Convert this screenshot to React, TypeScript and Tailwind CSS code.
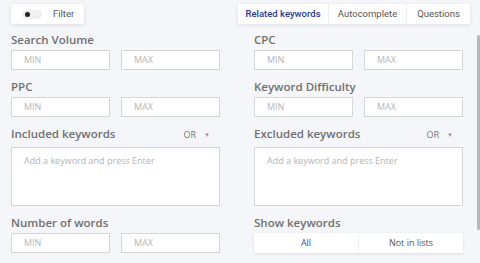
import React from 'react';

const label = "text-[11.5px] font-semibold text-[#707070] leading-none";
const input =
  "h-[20px] w-[99px] border border-[#d6d6d6] bg-white px-3 text-[9px] text-[#b5b5b5] flex items-center";

function MinMax() {
  return (
    <div className="flex justify-between">
      <div className={input}>MIN</div>
      <div className={input}>MAX</div>
    </div>
  );
}

function Field({ title }: { title: string }) {
  return (
    <div className="flex flex-col">
      <div className={`${label} h-[16px]`}>{title}</div>
      <MinMax />
    </div>
  );
}

function Tags({ title }: { title: string }) {
  return (
    <div className="flex flex-col">
      <div className="flex justify-between items-start h-[19px] pr-[10px]">
        <span className={label}>{title}</span>
        <span className="text-[9px] text-[#777] flex items-center gap-[8px] leading-none pt-[2px]">
          OR <span className="text-[6px] text-[#999]">▼</span>
        </span>
      </div>
      <div className="h-[59px] border border-[#d6d6d6] bg-white px-3 pt-[8px] text-[9px] text-[#b5b5b5] leading-none">
        Add a keyword and press Enter
      </div>
    </div>
  );
}

export default function App() {
  return (
    <div
      className="relative w-[480px] h-[263px] overflow-hidden bg-[#f5f6fa]"
      style={{ fontFamily: '"Open Sans", Roboto, sans-serif' }}
    >
      {/* top bar */}
      <div className="flex justify-between items-start pt-[4px] pl-[11px] pr-[10px]">
        <div className="flex items-center h-[20px] w-[73px] bg-white rounded-[3px] shadow-[0_1px_4px_rgba(0,0,0,0.12)] pl-[11px]">
          <div className="relative w-[20px] h-[9px] rounded-full bg-[#f0f0f2]">
            <div className="absolute left-[3px] top-[2px] w-[5px] h-[5px] rounded-full bg-[#222]" />
          </div>
          <span className="ml-[11px] text-[9.5px] text-[#555]" style={{ fontFamily: 'Roboto, sans-serif' }}>
            Filter
          </span>
        </div>
        <div
          className="flex h-[20px] bg-white shadow-[0_1px_4px_rgba(0,0,0,0.1)] text-[9.5px] text-[#555]"
          style={{ fontFamily: 'Roboto, sans-serif' }}
        >
          <div className="w-[91px] flex items-center justify-center font-medium text-[#2b3a8c] border-r border-[#eceef3]">
            Related keywords
          </div>
          <div className="w-[78px] flex items-center justify-center border-r border-[#eceef3]">
            Autocomplete
          </div>
          <div className="w-[63px] flex items-center justify-center">Questions</div>
        </div>
      </div>

      {/* filters grid */}
      <div className="grid grid-cols-[209px_209px] gap-x-[34px] px-[11px] pt-[10px]">
        <div className="flex flex-col gap-[11px]">
          <Field title="Search Volume" />
          <Field title="PPC" />
          <Tags title="Included keywords" />
          <Field title="Number of words" />
        </div>
        <div className="flex flex-col gap-[11px]">
          <Field title="CPC" />
          <Field title="Keyword Difficulty" />
          <Tags title="Excluded keywords" />
          <div className="flex flex-col">
            <div className={`${label} h-[16px]`}>Show keywords</div>
            <div className="flex h-[20px] bg-white shadow-[0_1px_3px_rgba(0,0,0,0.1)] text-[9px]">
              <div className="flex-1 flex items-center justify-center text-[#3b4ba0] border-r border-[#eef0f4]">All</div>
              <div className="flex-1 flex items-center justify-center text-[#555]">Not in lists</div>
            </div>
          </div>
        </div>
      </div>

      {/* scrollbar */}
      <div className="absolute right-0 top-[35px] w-[3px] h-[195px] rounded-full bg-[#b8b8b8]" />
    </div>
  );
}
